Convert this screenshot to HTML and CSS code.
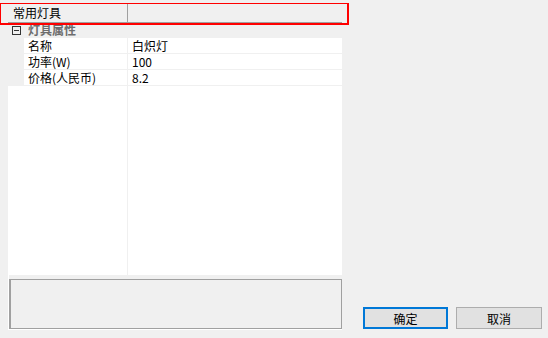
FILE: index.html
```html
<!DOCTYPE html>
<html lang="zh-CN">
<head>
    <meta charset="UTF-8">
    <title>灯具属性</title>
    <link rel="stylesheet" href="styles.css">
</head>
<body>
    <div class="window">
        <div class="left-pane">
            <div class="grid-header">
                <div class="grid-header-name">常用灯具</div>
                <div class="grid-header-value"></div>
            </div>
            <div class="category">
                <span class="toggle"><span class="toggle-minus"></span></span>
                <span class="category-title">灯具属性</span>
            </div>
            <div class="prop-row">
                <div class="gutter"></div>
                <div class="prop-name">名称</div>
                <div class="prop-value">白炽灯</div>
            </div>
            <div class="prop-row">
                <div class="gutter"></div>
                <div class="prop-name">功率(W)</div>
                <div class="prop-value">100</div>
            </div>
            <div class="prop-row">
                <div class="gutter"></div>
                <div class="prop-name">价格(人民币)</div>
                <div class="prop-value">8.2</div>
            </div>
            <div class="grid-empty">
                <div class="grid-empty-name"></div>
                <div class="grid-empty-value"></div>
            </div>
            <div class="desc-wrap">
                <div class="desc"></div>
            </div>
        </div>
        <div class="buttons">
            <button class="btn btn-default">确定</button>
            <button class="btn">取消</button>
        </div>
        <div class="highlight"></div>
    </div>
</body>
</html>
```

FILE: styles.css
```css
body {
    margin: 0;
    padding: 0;
    background: #f0f0f0;
    font-family: "Noto Sans CJK SC", "Liberation Sans", sans-serif;
    font-size: 12px;
    color: #000;
}
.window {
    position: relative;
    display: flex;
    width: 548px;
    height: 338px;
    overflow: hidden;
}
.left-pane {
    margin-left: 8px;
    width: 334px;
    padding-top: 4px;
    display: flex;
    flex-direction: column;
}
.grid-header {
    display: flex;
    height: 18px;
    border-bottom: 1px solid #a0a0a0;
    line-height: 18px;
}
.grid-header-name {
    width: 114px;
    padding-left: 5px;
    border-right: 1px solid #a0a0a0;
}
.grid-header-value {
    flex: 1;
}
.category {
    display: flex;
    align-items: center;
    height: 15px;
}
.toggle {
    position: relative;
    box-sizing: border-box;
    width: 9px;
    height: 9px;
    margin-left: 4px;
    border: 1px solid #333;
}
.toggle-minus {
    position: absolute;
    left: 1px;
    top: 3px;
    width: 5px;
    height: 1px;
    background: #333;
}
.category-title {
    margin-left: 7px;
    margin-top: -2px;
    font-weight: bold;
    color: #6d6d6d;
    line-height: 14px;
}
.prop-row {
    display: flex;
    height: 15px;
    line-height: 15px;
    border-bottom: 1px solid #f0f0f0;
    background: #fff;
}
.gutter {
    width: 16px;
    background: #f0f0f0;
}
.prop-name {
    width: 99px;
    padding-left: 4px;
    border-right: 1px solid #f0f0f0;
    white-space: nowrap;
}
.prop-value {
    flex: 1;
    padding-left: 4px;
}
.grid-empty {
    display: flex;
    height: 189px;
    background: #fff;
}
.grid-empty-name {
    width: 119px;
    border-right: 1px solid #f0f0f0;
}
.desc-wrap {
    padding-top: 4px;
    border-left: 1px solid #fff;
    border-bottom: 1px solid #fff;
}
.desc {
    height: 48px;
    border: 1px solid #a0a0a0;
    border-left-width: 2px;
}
.buttons {
    display: flex;
    align-items: flex-end;
    gap: 8px;
    margin-left: 21px;
    padding-bottom: 9px;
}
.btn {
    box-sizing: border-box;
    width: 86px;
    height: 22px;
    padding: 0;
    background: #e1e1e1;
    border: 1px solid #adadad;
    font-family: inherit;
    font-size: 12px;
    color: #000;
}
.btn-default {
    width: 85px;
    border: 2px solid #0078d7;
}
.highlight {
    position: absolute;
    left: 0;
    top: 3px;
    box-sizing: border-box;
    width: 349px;
    height: 22px;
    border: 1px solid #f00;
    border-right-width: 2px;
    border-bottom-width: 2px;
}
```
